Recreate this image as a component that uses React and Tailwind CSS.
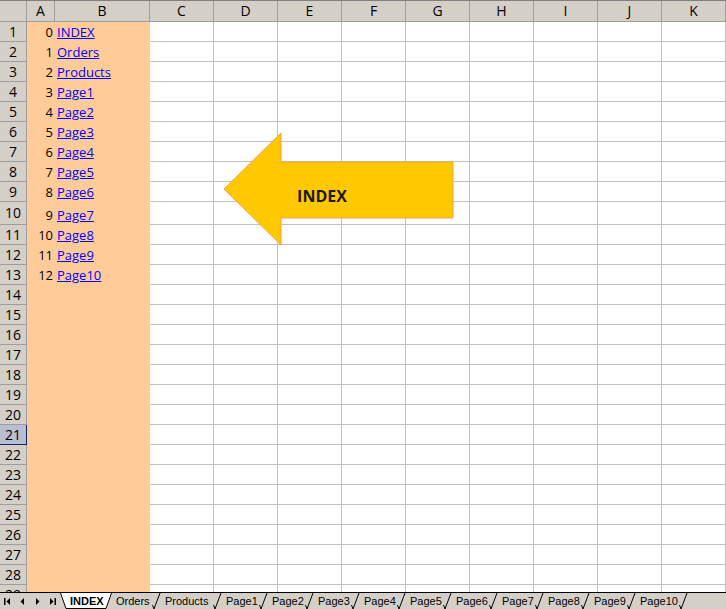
import React from "react";

const COLS = ["A", "B", "C", "D", "E", "F", "G", "H", "I", "J", "K"];
const LINKS = ["INDEX", "Orders", "Products", "Page1", "Page2", "Page3", "Page4", "Page5", "Page6", "Page7", "Page8", "Page9", "Page10"];
const GRID = "grid grid-cols-[27px_28px_95px_repeat(9,64px)] grid-rows-[100%]";

// text widths of the inactive tabs, the slash after each one is 15px
const TABS = [
  { name: "Orders", w: 34 },
  { name: "Products", w: 46 },
  { name: "Page1", w: 31 },
  { name: "Page2", w: 31 },
  { name: "Page3", w: 31 },
  { name: "Page4", w: 31 },
  { name: "Page5", w: 31 },
  { name: "Page6", w: 31 },
  { name: "Page7", w: 31 },
  { name: "Page8", w: 31 },
  { name: "Page9", w: 31 },
  { name: "Page10", w: 37 },
];

const Slash = () => (
  <svg width="15" height="16" viewBox="0 0 15 16" className="shrink-0">
    <path d="M4 16 L10 0" stroke="#000" strokeWidth="1" fill="none" />
    <path d="M2.5 12 L4 16" stroke="#000" strokeWidth="1" fill="none" />
  </svg>
);

const NavButtons = () => (
  <div className="flex w-[60px] h-full items-center">
    <div className="w-[15px] flex justify-center">
      <svg width="7" height="7" viewBox="0 0 7 7">
        <rect x="0" y="0" width="1.5" height="7" fill="#000" />
        <path d="M6 0 L2.5 3.5 L6 7 Z" fill="#000" />
      </svg>
    </div>
    <div className="w-[15px] flex justify-center">
      <svg width="5" height="7" viewBox="0 0 5 7">
        <path d="M4 0 L0.5 3.5 L4 7 Z" fill="#000" />
      </svg>
    </div>
    <div className="w-[15px] flex justify-center">
      <svg width="5" height="7" viewBox="0 0 5 7">
        <path d="M1 0 L4.5 3.5 L1 7 Z" fill="#000" />
      </svg>
    </div>
    <div className="w-[15px] flex justify-center">
      <svg width="7" height="7" viewBox="0 0 7 7">
        <path d="M1 0 L4.5 3.5 L1 7 Z" fill="#000" />
        <rect x="5.5" y="0" width="1.5" height="7" fill="#000" />
      </svg>
    </div>
  </div>
);

const Row = ({ n }) => {
  const h = n === 10 ? "h-[23px]" : "h-[20px]";
  const selected = n === 21;
  const link = LINKS[n - 1];
  return (
    <div className={`${GRID} ${h}`}>
      <div
        className={`flex items-center justify-center border-r border-b text-[14px] leading-4 overflow-hidden ${
          selected ? "bg-[#b9bed1] border-[#0a246a]" : "bg-[#d4d0c8] border-[#9d9d9d]"
        }`}
      >
        {n}
      </div>
      <div className="bg-[#ffcc99] flex items-end justify-end pr-[2px] pb-[2px] leading-4">
        {link ? n - 1 : ""}
      </div>
      <div className="bg-[#ffcc99] flex items-end pl-[2px] pb-[2px] leading-4">
        {link && (
          <a href="#" className="text-[#0000ff] underline">
            {link}
          </a>
        )}
      </div>
      {COLS.slice(2).map((c) => (
        <div key={c} className="border-r border-b border-[#c0c0c0]" />
      ))}
    </div>
  );
};

export default function App() {
  const rows = Array.from({ length: 29 }, (_, i) => i + 1);
  return (
    <div className="relative w-[726px] h-[609px] overflow-hidden bg-white text-[13px] text-black font-['Open_Sans',sans-serif]">
      <div className="h-[592px] overflow-hidden">
        <div className={`${GRID} h-[22px] border-t border-[#808080] text-[14px] leading-4`}>
          <div className="bg-[#d4d0c8] border-r border-b border-[#9d9d9d]" />
          {COLS.map((c) => (
            <div
              key={c}
              className="bg-[#d4d0c8] border-r border-b border-[#9d9d9d] flex items-center justify-center"
            >
              {c}
            </div>
          ))}
        </div>
        {rows.map((n) => (
          <Row key={n} n={n} />
        ))}
      </div>

      <div className="h-[17px] bg-[#d4d0c8] border-t border-black flex items-stretch text-[11px] font-['Liberation_Sans',Arial,sans-serif]">
        <NavButtons />
        <div className="relative w-[56px] h-full flex items-center">
          <svg width="56" height="16" viewBox="0 0 56 16" className="absolute left-0 top-0">
            <path d="M0 0 L6 15.5 L46 15.5 L52 0 Z" fill="#fff" />
            <path d="M0.5 0 L6 15.5 L46 15.5 L51.5 0" stroke="#000" strokeWidth="1" fill="none" />
          </svg>
          <span className="relative pl-[10px] font-bold">INDEX</span>
        </div>
        {TABS.map((t) => (
          <div key={t.name} className="flex items-center h-full">
            <span style={{ width: t.w }} className="whitespace-nowrap">
              {t.name}
            </span>
            <Slash />
          </div>
        ))}
      </div>

      {/* the arrow shape that sits over the sheet */}
      <svg
        className="absolute left-[220px] top-[128px]"
        width="240"
        height="122"
        viewBox="0 0 240 122"
      >
        <path
          d="M4 61 L61 5 L61 34 L233 34 L233 90 L61 90 L61 117 Z"
          fill="#ffc800"
          stroke="#f7a23a"
          strokeWidth="1"
        />
        <text
          x="102"
          y="74"
          textAnchor="middle"
          fontFamily="'Open Sans', sans-serif"
          fontWeight="700"
          fontSize="16"
          fill="#1a1a1a"
        >
          INDEX
        </text>
      </svg>
    </div>
  );
}
